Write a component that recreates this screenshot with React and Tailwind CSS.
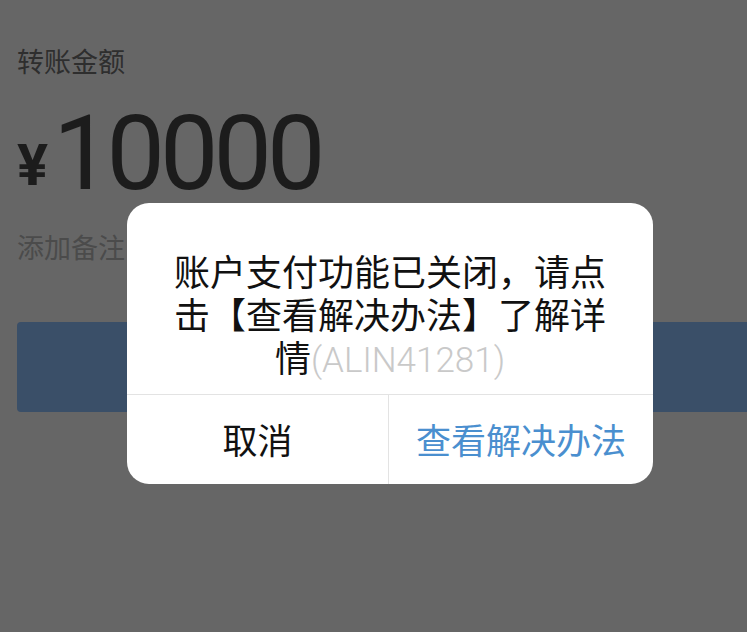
export default function App() {
  return (
    <div className="relative w-[747px] h-[632px] overflow-hidden bg-[#666666] font-['Noto_Sans_CJK_SC',sans-serif]">
      <div className="pl-[17px] pt-[44px]">
        <div className="text-[27px] leading-[34px] text-[#2e2e2e]">转账金额</div>
        <div className="flex items-end mt-[30px] h-[100px]">
          <span className="font-['Roboto',sans-serif] font-bold text-[58px] leading-none text-[#1c1c1c] mb-[14px]">¥</span>
          <span className="ml-[5px] font-['Roboto',sans-serif] text-[104px] leading-none tracking-[-5px] text-[#1c1c1c] mb-[2px]">10000</span>
        </div>
        <div className="mt-[22px] text-[27px] leading-[34px] text-[#4b4b4b]">添加备注</div>
        <div className="mt-[58px] h-[90px] rounded-l-[4px] bg-[#3a4f68]"></div>
      </div>

      <div className="absolute left-[127px] top-[203px] w-[526px] rounded-[22px] bg-white overflow-hidden">
        <div className="px-[30px] pt-[46px] pb-[12px] text-center text-[36px] leading-[43px] text-[#111]">
          <p>账户支付功能已关闭，请点</p>
          <p>击【查看解决办法】了解详</p>
          <p>
            情<span className="font-['Roboto',sans-serif] font-light text-[35px] text-[#c9c9c9]">(ALIN41281)</span>
          </p>
        </div>
        <div className="flex h-[90px] border-t border-[#e3e3e3]">
          <div className="w-[262px] flex items-center justify-center text-[35px] text-[#111] border-r border-[#e3e3e3]">取消</div>
          <div className="flex-1 flex items-center justify-center text-[35px] text-[#4a8fcf]">查看解决办法</div>
        </div>
      </div>
    </div>
  )
}
